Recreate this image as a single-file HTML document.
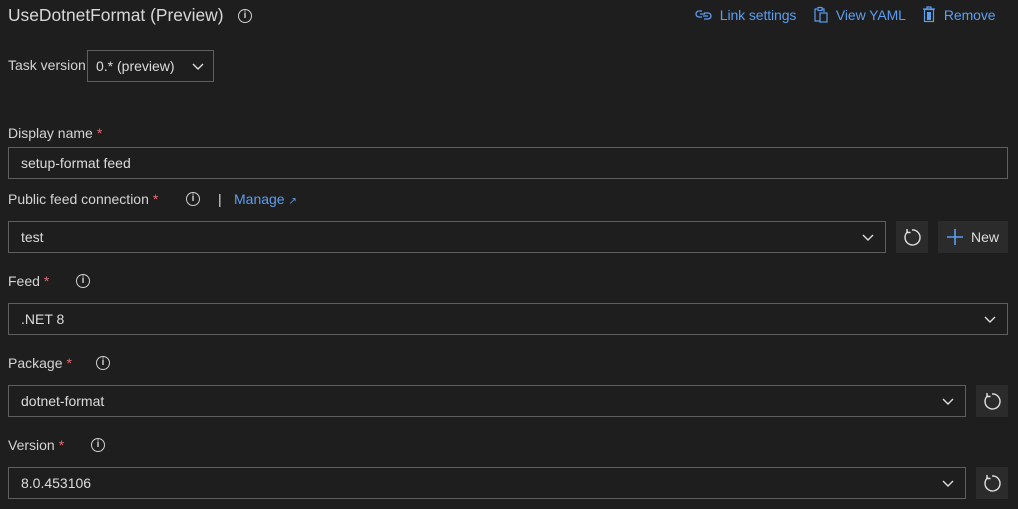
<!DOCTYPE html>
<html><head><style>
body{margin:0;width:1018px;height:509px;background:#1e1e1e;font-family:"Liberation Sans",sans-serif;color:#d0d0d0;position:relative;overflow:hidden;font-size:14px}
.a{position:absolute}
.lbl{position:absolute;left:8px;font-size:14px;color:#d4d4d4}
.req{color:#e06c75;margin-left:4px}
.in{position:absolute;left:8px;border:1px solid #5f5f5f;box-sizing:border-box;height:32px;font-size:14px;line-height:30px;padding-left:12px;color:#dcdcdc}
.btn{position:absolute;background:#2b2b2b;height:32px;box-sizing:border-box}
.info{position:absolute;width:12px;height:12px;border:1.5px solid #d0d0d0;border-radius:50%;font-size:10px;line-height:12px;text-align:center;font-weight:bold;color:#d0d0d0}
.chev{position:absolute;right:10px;top:10px}
.blue{color:#5b9ef0}
</style></head><body>
<div class="a" style="left:8px;top:5px;font-size:17.4px;color:#d8d8d8">UseDotnetFormat (Preview)</div>
<div class="info" style="left:238px;top:9px">i</div>

<div class="a blue" style="left:695px;top:6px;font-size:14px;letter-spacing:-0.1px">
<svg width="18" height="14" viewBox="0 0 18 14" style="vertical-align:-2px"><g fill="none" stroke="#5b9ef0" stroke-width="1.3"><path d="M7 3H4a3 3 0 0 0 0 6h3"/><path d="M9 5h4a3 3 0 0 1 0 6H9"/><path d="M5 6h5M8 8h5"/></g></svg>
<span style="margin-left:3px">Link settings</span>
<svg width="16" height="17" viewBox="0 0 16 17" style="vertical-align:-3px;margin-left:13px"><g fill="none" stroke="#5b9ef0" stroke-width="1.2"><path d="M4 3h-2v12h5"/><rect x="5" y="1.5" width="4" height="3"/><path d="M9 3h2v3"/><rect x="7" y="7" width="7" height="9"/></g></svg>
<span style="margin-left:3px">View YAML</span>
<svg width="14" height="17" viewBox="0 0 14 17" style="vertical-align:-3px;margin-left:13px"><g fill="none" stroke="#5b9ef0" stroke-width="1.2"><path d="M1 3h12M5 3V1h4v2"/><rect x="2.5" y="3.5" width="9" height="12"/></g><rect x="5" y="6" width="4" height="8" fill="#5b9ef0"/></svg>
<span style="margin-left:4px">Remove</span>
</div>

<div class="lbl" style="top:57px">Task version</div>
<div class="in" style="left:87px;top:50px;width:127px;height:32px;padding-left:8px">0.* (preview)
<svg class="chev" width="14" height="10" viewBox="0 0 14 10" style="right:8px"><path d="M2 3l5 5 5-5" fill="none" stroke="#ddd" stroke-width="1.4"/></svg></div>

<div class="lbl" style="top:125px">Display name<span class="req">*</span></div>
<div class="in" style="top:147px;width:1000px">setup-format feed</div>

<div class="lbl" style="top:191px">Public feed connection<span class="req">*</span></div>
<div class="info" style="left:186px;top:192px">i</div>
<div class="a" style="left:218px;top:191px;color:#ddd">|</div>
<div class="a blue" style="left:234px;top:191px">Manage <span style="font-size:10px">↗</span></div>
<div class="in" style="top:221px;width:878px">test<svg class="chev" width="14" height="10" viewBox="0 0 14 10"><path d="M2 3l5 5 5-5" fill="none" stroke="#ddd" stroke-width="1.4"/></svg></div>
<div class="btn" style="left:896px;top:221px;width:32px"><svg width="32" height="32" viewBox="0 0 32 32"><path d="M12 10.5A7.5 7.5 0 1 0 16 9" fill="none" stroke="#e0e0e0" stroke-width="1.4"/><path d="M11 8v3.5h3.5" fill="none" stroke="#e0e0e0" stroke-width="1.4"/></svg></div>
<div class="btn" style="left:938px;top:221px;width:70px;line-height:32px;color:#ddd"><svg width="18" height="18" viewBox="0 0 18 18" style="position:absolute;left:8px;top:7px"><path d="M9 1v16M1 9h16" stroke="#5b9ef0" stroke-width="1.6"/></svg><span style="position:absolute;left:33px">New</span></div>

<div class="lbl" style="top:273px">Feed<span class="req">*</span></div>
<div class="info" style="left:76px;top:274px">i</div>
<div class="in" style="top:303px;width:1000px">.NET 8<svg class="chev" width="14" height="10" viewBox="0 0 14 10"><path d="M2 3l5 5 5-5" fill="none" stroke="#ddd" stroke-width="1.4"/></svg></div>

<div class="lbl" style="top:355px">Package<span class="req">*</span></div>
<div class="info" style="left:96px;top:356px">i</div>
<div class="in" style="top:385px;width:958px">dotnet-format<svg class="chev" width="14" height="10" viewBox="0 0 14 10"><path d="M2 3l5 5 5-5" fill="none" stroke="#ddd" stroke-width="1.4"/></svg></div>
<div class="btn" style="left:976px;top:385px;width:32px"><svg width="32" height="32" viewBox="0 0 32 32"><path d="M12 10.5A7.5 7.5 0 1 0 16 9" fill="none" stroke="#e0e0e0" stroke-width="1.4"/><path d="M11 8v3.5h3.5" fill="none" stroke="#e0e0e0" stroke-width="1.4"/></svg></div>

<div class="lbl" style="top:437px">Version<span class="req">*</span></div>
<div class="info" style="left:91px;top:438px">i</div>
<div class="in" style="top:467px;width:958px">8.0.453106<svg class="chev" width="14" height="10" viewBox="0 0 14 10"><path d="M2 3l5 5 5-5" fill="none" stroke="#ddd" stroke-width="1.4"/></svg></div>
<div class="btn" style="left:976px;top:467px;width:32px"><svg width="32" height="32" viewBox="0 0 32 32"><path d="M12 10.5A7.5 7.5 0 1 0 16 9" fill="none" stroke="#e0e0e0" stroke-width="1.4"/><path d="M11 8v3.5h3.5" fill="none" stroke="#e0e0e0" stroke-width="1.4"/></svg></div>
</body></html>
